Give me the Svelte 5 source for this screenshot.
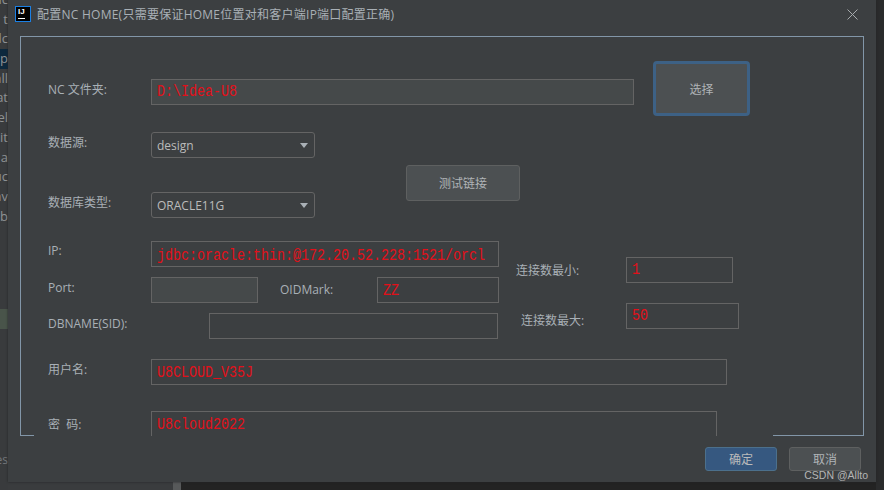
<script lang="ts">
	const sideRows = [
		{ text: 'ic', cls: '' },
		{ text: 't', cls: '' },
		{ text: 'dc', cls: '' },
		{ text: 'op', cls: 'picked' },
		{ text: 'all', cls: '' },
		{ text: 'at', cls: '' },
		{ text: 'el', cls: '' },
		{ text: 'dit', cls: '' },
		{ text: 'a', cls: '' },
		{ text: 'uc', cls: '' },
		{ text: 'av', cls: '' },
		{ text: 'ub', cls: '' }
	];
</script>

<div class="screen">
	<aside class="ide-side">
		{#each sideRows as row}
			<div class="side-row {row.cls}"><span>{row.text}</span></div>
		{/each}
		<div class="side-mark"></div>
		<div class="side-es">es</div>
	</aside>

	<div class="center">
		<div class="dialog">
			<header class="titlebar">
				<div class="logo"><span class="logo-text">IJ</span><span class="logo-bar"></span></div>
				<span class="title">配置NC HOME(只需要保证HOME位置对和客户端IP端口配置正确)</span>
				<svg class="close" width="11" height="11" viewBox="0 0 11 11">
					<path d="M0.5 0.5 L10.5 10.5 M10.5 0.5 L0.5 10.5" stroke="#a7abad" stroke-width="1" fill="none" />
				</svg>
			</header>

			<section class="panel">
				<div class="row nc">
					<span class="label">NC 文件夹:</span>
					<div class="field filled nc-path"><span class="val">D:\Idea-U8</span></div>
					<button class="btn pick">选择</button>
				</div>

				<div class="row sources">
					<div class="stack gap-34">
						<div class="line">
							<span class="label">数据源:</span>
							<div class="select">design<i class="caret"></i></div>
						</div>
						<div class="line">
							<span class="label">数据库类型:</span>
							<div class="select">ORACLE11G<i class="caret"></i></div>
						</div>
					</div>
					<button class="btn test">测试链接</button>
				</div>

				<div class="row conn">
					<div class="stack gap-10">
						<div class="line">
							<span class="label ip-label">IP:</span>
							<div class="field ip"><span class="val">jdbc:oracle:thin:@172.20.52.228:1521/orcl</span></div>
						</div>
						<div class="line">
							<span class="label">Port:</span>
							<div class="field filled port"></div>
							<span class="label oid">OIDMark:</span>
							<div class="field oid-val"><span class="val">ZZ</span></div>
						</div>
						<div class="line">
							<span class="label db">DBNAME(SID):</span>
							<div class="field db-val"></div>
						</div>
					</div>
					<div class="pool">
						<div class="line pool-min">
							<span class="label">连接数最小:</span>
							<div class="field min"><span class="val">1</span></div>
						</div>
						<div class="line pool-max">
							<span class="label">连接数最大:</span>
							<div class="field max"><span class="val">50</span></div>
						</div>
					</div>
				</div>

				<div class="line user">
					<span class="label">用户名:</span>
					<div class="field user-val"><span class="val">U8CLOUD_V35J</span></div>
				</div>

				<div class="line pwd">
					<span class="label">密&nbsp;&nbsp;码:</span>
					<div class="field pwd-val"><span class="val">U8cloud2022</span></div>
				</div>

				<div class="panel-foot"><i></i><i></i></div>
			</section>

			<footer class="actions">
				<button class="btn ok">确定</button>
				<button class="btn cancel">取消</button>
			</footer>
			<span class="watermark">CSDN @Allto</span>
		</div>
		<div class="under">
			<div class="under-left"></div>
			<div class="under-thumb"></div>
		</div>
	</div>
</div>

<style>
	:global(body) {
		margin: 0;
		background: #232323;
	}
	.screen {
		display: flex;
		width: 884px;
		height: 490px;
		overflow: hidden;
		background: #2a2b2c;
		font-family: 'Open Sans', 'Noto Sans CJK SC', sans-serif;
		font-size: 12px;
		color: #a9b0b6;
	}
	.ide-side {
		position: relative;
		width: 8px;
		flex: none;
		background: #393b3d;
		overflow: hidden;
	}
	.side-row {
		display: flex;
		justify-content: flex-end;
		height: 19.7px;
		line-height: 19px;
		white-space: nowrap;
		color: #8f9294;
		font-size: 13px;
		position: relative;
		top: -10px;
	}
	.side-row.picked {
		background: #0d293e;
	}
	.side-mark {
		position: absolute;
		left: 0;
		top: 309px;
		width: 8px;
		height: 20px;
		background: #49544a;
	}
	.side-es {
		position: absolute;
		right: 0;
		top: 451px;
		color: #73767a;
		font-size: 12px;
	}
	.center {
		display: flex;
		flex-direction: column;
		width: 868px;
		flex: none;
	}
	.dialog {
		position: relative;
		height: 482px;
		flex: none;
		background: #3c3f41;
		box-shadow: 0 0 2px #242526;
	}
	.under {
		display: flex;
		height: 8px;
		background: #232323;
	}
	.under-left {
		width: 165px;
		background: #3a3c3e;
	}
	.under-thumb {
		width: 8px;
		background: #57595a;
	}
	.titlebar {
		display: flex;
		align-items: center;
		height: 28px;
		padding: 0 0 0 7px;
	}
	.logo {
		box-sizing: border-box;
		position: relative;
		width: 16px;
		height: 16px;
		flex: none;
		background: #000;
		border: 1px solid #1b80e4;
	}
	.logo-text {
		position: absolute;
		left: 2px;
		top: 0;
		font: bold 8px/10px 'Liberation Sans', sans-serif;
		color: #fff;
	}
	.logo-bar {
		position: absolute;
		left: 2px;
		bottom: 2px;
		width: 7px;
		height: 1px;
		background: #fff;
	}
	.title {
		margin-left: 6px;
		font-size: 12px;
		letter-spacing: 0.25px;
		white-space: nowrap;
		color: #a9b0b6;
	}
	.close {
		margin-left: auto;
		margin-right: 18px;
	}
	.panel {
		position: relative;
		box-sizing: border-box;
		width: 844px;
		height: 400px;
		margin: 8px 0 0 12px;
		padding: 24px 0 0 27px;
		border: 1px solid #8296a8;
		border-bottom: none;
		overflow: hidden;
	}
	.panel-foot {
		position: absolute;
		left: 0;
		right: 0;
		bottom: 0;
		display: flex;
		justify-content: space-between;
	}
	.panel-foot i {
		display: block;
		width: 13px;
		height: 1px;
		background: #8296a8;
	}
	.panel-foot i:last-child {
		width: 90px;
	}
	.row {
		display: flex;
	}
	.line {
		display: flex;
		align-items: center;
	}
	.stack {
		display: flex;
		flex-direction: column;
	}
	.gap-34 {
		gap: 34px;
	}
	.gap-10 {
		gap: 10px;
	}
	.label {
		width: 103px;
		flex: none;
		position: relative;
		top: -3px;
		white-space: nowrap;
	}
	.ip-label {
		top: -4px;
	}
	.field {
		box-sizing: border-box;
		height: 26px;
		flex: none;
		padding-left: 5px;
		border: 1px solid #646464;
		font-family: 'Liberation Mono', monospace;
		font-size: 16px;
		line-height: 25px;
		color: #e2101a;
		white-space: nowrap;
		overflow: hidden;
	}
	.val {
		display: inline-block;
		transform: scaleX(0.8333);
		transform-origin: 0 50%;
	}
	.filled {
		background: #45494a;
	}
	.nc {
		height: 55px;
	}
	.nc .label {
		top: -2px;
		margin-top: 18px;
		height: 26px;
		line-height: 26px;
	}
	.nc-path {
		width: 483px;
		margin-top: 18px;
	}
	.btn {
		box-sizing: border-box;
		font: inherit;
		color: #b0b4b7;
		background: #4c5052;
		border: 1px solid #5e6060;
		border-radius: 3px;
		padding: 0;
	}
	.pick {
		width: 97px;
		height: 55px;
		margin-left: 19px;
		border: 3px solid #3d6185;
		border-radius: 4px;
	}
	.sources {
		margin-top: 16px;
	}
	.select {
		box-sizing: border-box;
		position: relative;
		width: 164px;
		height: 26px;
		padding-left: 5px;
		line-height: 25px;
		border: 1px solid #646464;
		border-radius: 3px;
		background: #3c3f41;
		color: #bbbbbb;
	}
	.caret {
		position: absolute;
		right: 6px;
		top: 10px;
		width: 0;
		height: 0;
		border-left: 4.5px solid transparent;
		border-right: 4.5px solid transparent;
		border-top: 5px solid #a9b0b6;
	}
	.test {
		width: 114px;
		height: 36px;
		margin: 33px 0 0 91px;
	}
	.conn {
		margin-top: 23px;
	}
	.ip {
		width: 348px;
		line-height: 29px;
	}
	.port {
		width: 107px;
	}
	.label.oid {
		top: -1px;
		width: 97px;
		margin-left: 22px;
	}
	.oid-val {
		width: 122px;
		line-height: 27px;
	}
	.label.db {
		width: 161px;
	}
	.db-val {
		width: 289px;
	}
	.pool {
		display: flex;
		flex-direction: column;
		margin-left: 17px;
		padding-top: 16px;
	}
	.pool .label {
		top: 0;
		width: 110px;
	}
	.pool-max {
		margin-top: 20px;
		margin-left: 5px;
	}
	.pool-max .label {
		top: 4px;
		width: 105px;
	}
	.min {
		width: 107px;
	}
	.max {
		width: 113px;
	}
	.user {
		margin-top: 20px;
	}
	.user-val {
		width: 576px;
		line-height: 27px;
	}
	.pwd {
		margin-top: 26px;
		height: 26px;
	}
	.pwd .label {
		top: 0;
	}
	.pwd-val {
		width: 566px;
		line-height: 27px;
	}
	.actions {
		display: flex;
		justify-content: flex-end;
		gap: 12px;
		margin: 11px 15px 0 0;
	}
	.ok,
	.cancel {
		width: 72px;
		height: 24px;
	}
	.ok {
		background: #365880;
		border-color: #4c708c;
		color: #bbbbbb;
	}
	.watermark {
		position: absolute;
		right: 8px;
		bottom: 1px;
		font-family: 'Liberation Sans', sans-serif;
		font-size: 10.5px;
		color: #b5b5b5;
	}
</style>
